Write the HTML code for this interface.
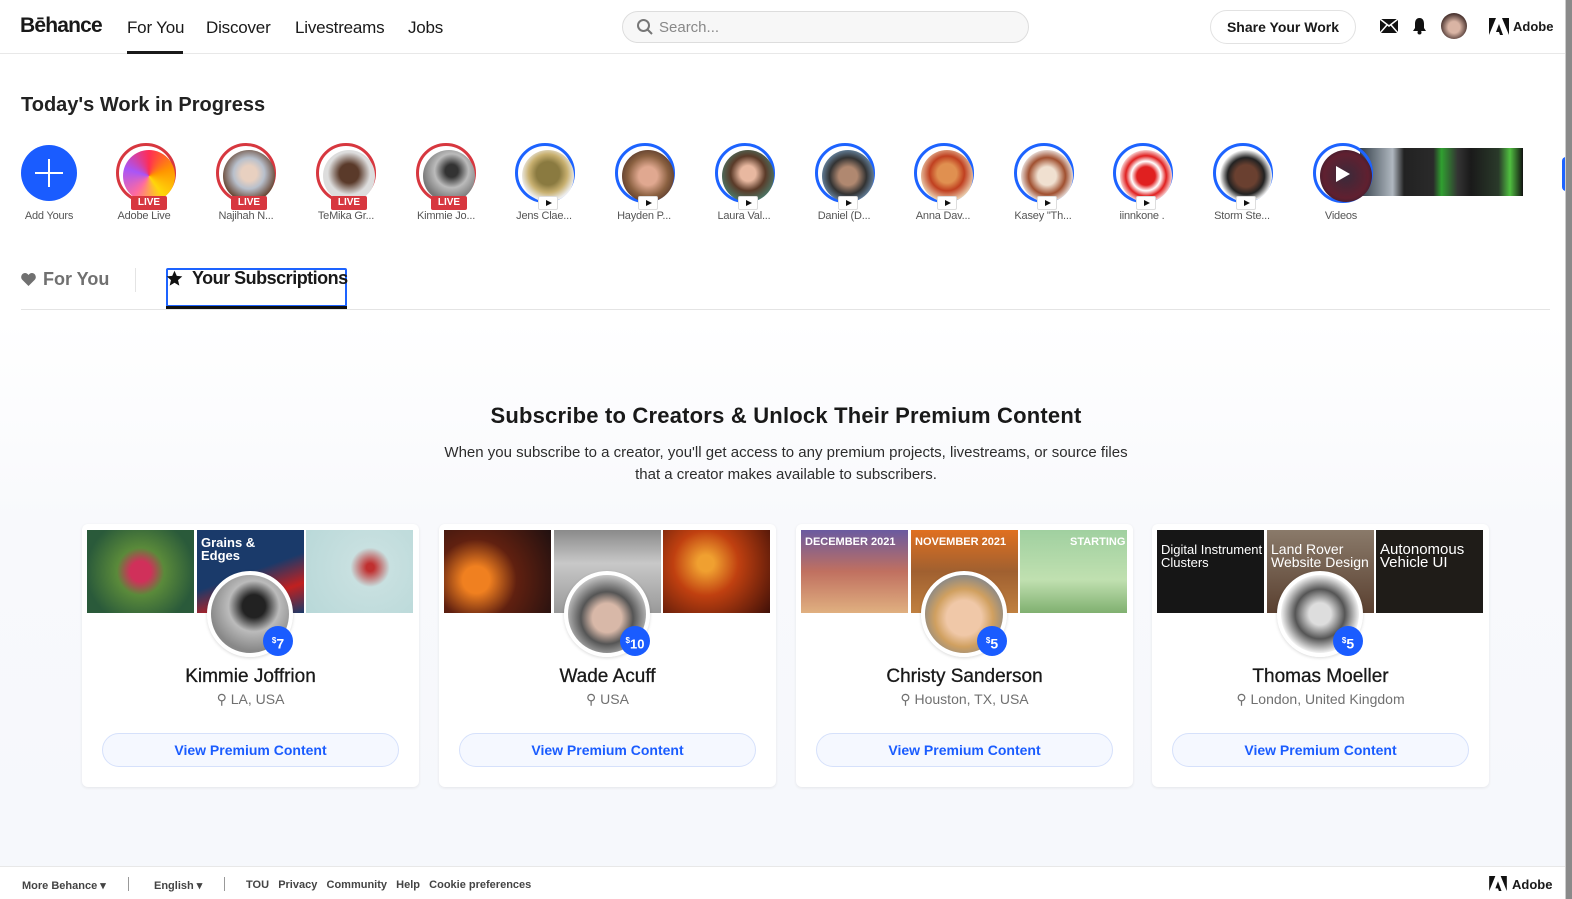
<!DOCTYPE html>
<html><head><meta charset="utf-8"><style>
*{box-sizing:border-box;margin:0;padding:0}
body{width:1572px;height:899px;overflow:hidden;font-family:"Liberation Sans",Arial,sans-serif;color:#191919;background:linear-gradient(#fff 0,#fff 320px,#f8f9fc 520px,#f6f8fc 866px);position:relative}
.abs{position:absolute}
.hdr{left:0;top:0;width:1565px;height:54px;border-bottom:1px solid #e8e8e8;background:#fff}
.nav{top:18px;font-size:17px;color:#191919;letter-spacing:-0.2px}
.scroll{left:1565px;top:0;width:7px;height:899px;background:#8a8a8a;border-left:1px solid #ccc}
.av{width:60px;height:60px;border-radius:50%;top:141px}
.av .in{position:absolute;left:4px;top:4px;width:52px;height:52px;border-radius:50%}
.live{border:3px solid #d7373f}
.blue{border:3px solid #1d63ff}
.badge{position:absolute;left:12px;top:50px;width:36px;height:14px;background:#d7373f;color:#fff;font-size:10px;font-weight:bold;text-align:center;line-height:14px;border-radius:2px}
.play{position:absolute;left:20px;top:50px;width:20px;height:14px;background:#fff;border:1px solid #ddd;border-radius:2px}
.play:after{content:"";position:absolute;left:7px;top:3px;border-left:6px solid #111;border-top:3.5px solid transparent;border-bottom:3.5px solid transparent}
.lbl{top:208px;font-size:11px;color:#555;width:100px;text-align:center;letter-spacing:-0.2px}
.card{top:524px;width:337px;height:263px;background:#fff;border-radius:6px;box-shadow:0 1px 3px rgba(0,0,0,.08)}
.img{position:absolute;top:6px;height:83px;width:107px}
.pav{position:absolute;left:125px;top:47px;width:86px;height:86px;border-radius:50%;border:4px solid #fff;box-shadow:0 1px 3px rgba(0,0,0,.15)}
.price{position:absolute;left:181px;top:102px;width:30px;height:30px;border-radius:50%;background:#1a5cff;color:#fff;font-weight:bold;font-size:14px;text-align:center;line-height:30px}
.price sup{font-size:8px}
.nm{position:absolute;left:0;width:100%;top:142px;text-align:center;font-size:19px;color:#191919;-webkit-text-stroke:0.3px #191919}
.loc{position:absolute;left:0;width:100%;top:167px;text-align:center;font-size:14px;color:#707070}
.btn{position:absolute;left:20px;top:209px;width:297px;height:34px;border:1px solid #d6e1fb;border-radius:17px;background:#f5f8ff;color:#1a5cff;font-weight:bold;font-size:14px;text-align:center;line-height:32px}
.imgt{position:absolute;left:4px;top:6px;color:#fff;font-size:13px;font-weight:bold;line-height:13px}
.ft{top:879px;font-size:11px;color:#444;font-weight:bold}
</style></head><body>
<div class="abs hdr"></div>
<div class="abs" style="left:20px;top:14px;font-size:21px;font-weight:bold;letter-spacing:-0.8px">Bēhance</div>
<div class="abs nav" style="left:127px">For You</div>
<div class="abs" style="left:127px;top:51px;width:56px;height:3px;background:#191919"></div>
<div class="abs nav" style="left:206px">Discover</div>
<div class="abs nav" style="left:295px">Livestreams</div>
<div class="abs nav" style="left:408px">Jobs</div>
<div class="abs" style="left:622px;top:11px;width:407px;height:32px;border:1px solid #ddd;border-radius:16px;background:#f7f7f7"></div>
<svg class="abs" style="left:636px;top:18px" width="18" height="18" viewBox="0 0 18 18"><circle cx="7.5" cy="7.5" r="5.5" fill="none" stroke="#777" stroke-width="2"/><path d="M11.5 11.5L16 16" stroke="#777" stroke-width="2"/></svg>
<div class="abs" style="left:659px;top:19px;font-size:15px;color:#888">Search...</div>
<div class="abs" style="left:1210px;top:10px;width:146px;height:34px;border:1px solid #e2e2e2;border-radius:17px;text-align:center;line-height:33px;font-size:14px;font-weight:bold">Share Your Work</div>
<svg class="abs" style="left:1380px;top:19px" width="18" height="14" viewBox="0 0 18 14"><rect width="18" height="14" fill="#111"/><path d="M0 0L9 7L18 0M0 14L7 6M18 14L11 6" stroke="#fff" stroke-width="1.5" fill="none"/></svg>
<svg class="abs" style="left:1412px;top:17px" width="15" height="18" viewBox="0 0 15 18"><path d="M7.5 1C4 1 3 4 3 7v4L1 14h13l-2-3V7c0-3-1-6-4.5-6z" fill="#111"/><circle cx="7.5" cy="15.5" r="2" fill="#111"/></svg>
<div class="abs" style="left:1441px;top:13px;width:26px;height:26px;border-radius:50%;background:radial-gradient(circle at 50% 55%,#d9b4a4 30%,#4a3430 70%)"></div>
<svg class="abs" style="left:1489px;top:18px" width="20" height="17" viewBox="0 0 20 17"><path d="M0 0h7L0 17zM13 0h7v17zM10 6l4 11h-3l-1-3H7z" fill="#111"/></svg>
<div class="abs" style="left:1513px;top:19px;font-size:13px;font-weight:bold">Adobe</div>

<div class="abs" style="left:0;top:2px;width:1572px;height:860px">
<div class="abs" style="left:21px;top:92px;font-size:20px;font-weight:bold;color:#222">Today's Work in Progress</div>

<div class="abs" style="left:21px;top:143px;width:56px;height:56px;border-radius:50%;background:#1a5cff"></div>
<div class="abs" style="left:35px;top:170px;width:28px;height:2px;background:#fff"></div>
<div class="abs" style="left:48px;top:157px;width:2px;height:28px;background:#fff"></div>
<div class="abs lbl" style="left:-1px">Add Yours</div>

<div class="abs av live" style="left:116px"><div class="in" style="background:conic-gradient(#ff2d55,#ff9500,#ffd60a,#ff6b9e,#a855f7,#ff2d55)"></div><div class="badge">LIVE</div></div>
<div class="abs lbl" style="left:94px">Adobe Live</div>
<div class="abs av live" style="left:216px"><div class="in" style="background:radial-gradient(circle at 50% 45%,#e8d0c0 20%,#b8c0cc 40%,#6a4a38 70%)"></div><div class="badge">LIVE</div></div>
<div class="abs lbl" style="left:196px">Najihah N...</div>
<div class="abs av live" style="left:316px"><div class="in" style="background:radial-gradient(circle at 50% 45%,#5a3a2a 25%,#ddd 55%)"></div><div class="badge">LIVE</div></div>
<div class="abs lbl" style="left:296px">TeMika Gr...</div>
<div class="abs av live" style="left:416px"><div class="in" style="background:radial-gradient(circle at 55% 40%,#333 15%,#bbb 40%,#777 70%)"></div><div class="badge">LIVE</div></div>
<div class="abs lbl" style="left:396px">Kimmie Jo...</div>

<div class="abs av blue" style="left:515px"><div class="in" style="background:radial-gradient(circle at 50% 45%,#8a7a40 30%,#c8b070 50%,#eee 70%)"></div><div class="play"></div></div>
<div class="abs lbl" style="left:494px">Jens Clae...</div>
<div class="abs av blue" style="left:615px"><div class="in" style="background:radial-gradient(circle at 50% 50%,#e0a890 25%,#8a6040 55%,#604030 75%)"></div><div class="play"></div></div>
<div class="abs lbl" style="left:594px">Hayden P...</div>
<div class="abs av blue" style="left:715px"><div class="in" style="background:radial-gradient(circle at 50% 45%,#e8b8a0 20%,#5a3a28 45%,#4a7a6a 75%)"></div><div class="play"></div></div>
<div class="abs lbl" style="left:694px">Laura Val...</div>
<div class="abs av blue" style="left:815px"><div class="in" style="background:radial-gradient(circle at 50% 50%,#b08870 25%,#333 50%,#6a8aa8 75%)"></div><div class="play"></div></div>
<div class="abs lbl" style="left:794px">Daniel (D...</div>
<div class="abs av blue" style="left:914px"><div class="in" style="background:radial-gradient(circle at 50% 45%,#e09050 25%,#c04020 45%,#f0e0c0 75%)"></div><div class="play"></div></div>
<div class="abs lbl" style="left:893px">Anna Dav...</div>
<div class="abs av blue" style="left:1014px"><div class="in" style="background:radial-gradient(circle at 50% 50%,#f0e0d0 25%,#a05030 50%,#f4f4f4 75%)"></div><div class="play"></div></div>
<div class="abs lbl" style="left:993px">Kasey "Th...</div>
<div class="abs av blue" style="left:1113px"><div class="in" style="background:radial-gradient(circle,#e02020 25%,#fff 40%,#e02020 55%,#fff 75%)"></div><div class="play"></div></div>
<div class="abs lbl" style="left:1092px">iinnkone .</div>
<div class="abs av blue" style="left:1213px"><div class="in" style="background:radial-gradient(circle at 50% 50%,#6a4030 30%,#222 50%,#eee 70%)"></div><div class="play"></div></div>
<div class="abs lbl" style="left:1192px">Storm Ste...</div>
<div class="abs" style="left:1360px;top:146px;width:163px;height:48px;background:linear-gradient(90deg,#34404a,#b0b8c0 20%,#222 27%,#2a2a2a 45%,#30a030 50%,#333 60%,#1a1a1a 68%,#2a3a2a 85%,#50c040 92%,#111)"></div>
<div class="abs av blue" style="left:1313px"><div class="in" style="background:radial-gradient(circle,#3a2a3a,#602030 60%,#1a1a2a)"></div></div>
<svg class="abs" style="left:1335px;top:163px" width="16" height="18"><path d="M1 1L15 9L1 17z" fill="#fff"/></svg>
<div class="abs lbl" style="left:1291px">Videos</div>
<div class="abs" style="left:1562px;top:155px;width:4px;height:34px;border:3px solid #1d63ff;border-right:none;border-radius:20px 0 0 20px"></div>

<svg class="abs" style="left:21px;top:271px" width="15" height="13" viewBox="0 0 15 13"><path d="M7.5 13L1 6.5C-1 4 1 0 4 0c1.5 0 2.8 1 3.5 2C8.2 1 9.5 0 11 0c3 0 5 4 3 6.5z" fill="#707070"/></svg>
<div class="abs" style="left:43px;top:267px;font-size:18px;font-weight:bold;color:#707070">For You</div>
<div class="abs" style="left:135px;top:266px;width:1px;height:24px;background:#e4e4e4"></div>
<div class="abs" style="left:166px;top:266px;width:181px;height:39px;border:2px solid #1d63ff;border-radius:2px"></div>
<div class="abs" style="left:166px;top:304px;width:181px;height:3px;background:#111"></div>
<svg class="abs" style="left:166px;top:268px" width="17" height="17" viewBox="0 0 24 24"><path d="M12 1l3.2 7.3 7.8.7-6 5.3 1.8 7.7L12 18l-6.8 4 1.8-7.7-6-5.3 7.8-.7z" fill="#111"/></svg>
<div class="abs" style="left:192px;top:266px;font-size:18px;font-weight:bold;color:#191919;letter-spacing:-0.5px">Your Subscriptions</div>
<div class="abs" style="left:21px;top:307px;width:1529px;height:1px;background:#e4e4e4"></div>

<div class="abs" style="left:0;width:1572px;top:401px;text-align:center;font-size:22px;font-weight:bold;color:#191919;letter-spacing:0.2px">Subscribe to Creators &amp; Unlock Their Premium Content</div>
<div class="abs" style="left:0;width:1572px;top:440px;text-align:center;font-size:15px;line-height:22px;color:#2c2c2c">When you subscribe to a creator, you'll get access to any premium projects, livestreams, or source files<br>that a creator makes available to subscribers.</div>

<div class="abs card" style="left:82px;top:522px">
<div class="img" style="left:5px;background:radial-gradient(circle at 50% 50%,#d0305a 15%,#5a8a3a 35%,#2a5a3a 80%)"></div>
<div class="img" style="left:115px;background:linear-gradient(160deg,#1a3a6a 50%,#c02020 75%,#1a3a6a)"><div class="imgt">Grains &amp;<br>Edges</div></div>
<div class="img" style="left:224px;background:radial-gradient(circle at 60% 45%,#c03030 5%,#c8e0e0 25%,#b8d8d8)"></div>
<div class="pav" style="background:radial-gradient(circle at 55% 40%,#222 18%,#bbb 40%,#888 70%)"></div>
<div class="price"><sup>$</sup>7</div>
<div class="nm">Kimmie Joffrion</div><div class="loc">⚲ LA, USA</div>
<div class="btn">View Premium Content</div></div>

<div class="abs card" style="left:439px;top:522px">
<div class="img" style="left:5px;background:radial-gradient(circle at 30% 60%,#f08020 15%,#602010 45%,#201010)"></div>
<div class="img" style="left:115px;background:linear-gradient(#8a8a8a,#c8c8c8 40%,#999)"></div>
<div class="img" style="left:224px;background:radial-gradient(circle at 40% 40%,#f0a030 10%,#c04010 40%,#401008)"></div>
<div class="pav" style="background:radial-gradient(circle at 50% 55%,#d8b8a8 25%,#555 45%,#ccc 75%)"></div>
<div class="price" style="font-size:13px"><sup>$</sup>10</div>
<div class="nm">Wade Acuff</div><div class="loc">⚲ USA</div>
<div class="btn">View Premium Content</div></div>

<div class="abs card" style="left:796px;top:522px">
<div class="img" style="left:5px;background:linear-gradient(#6a5aa0,#c07060 50%,#e0b080)"><div class="imgt" style="font-size:11px">DECEMBER 2021</div></div>
<div class="img" style="left:115px;background:linear-gradient(#e07020,#a06030 50%,#c08040)"><div class="imgt" style="font-size:11px">NOVEMBER 2021</div></div>
<div class="img" style="left:224px;background:linear-gradient(#a0d0a0,#c0e0b0 60%,#80b070)"><div class="imgt" style="left:50px;font-size:11px">STARTING</div></div>
<div class="pav" style="background:radial-gradient(circle at 50% 55%,#f0c8a8 30%,#d0a060 50%,#888 75%)"></div>
<div class="price"><sup>$</sup>5</div>
<div class="nm">Christy Sanderson</div><div class="loc">⚲ Houston, TX, USA</div>
<div class="btn">View Premium Content</div></div>

<div class="abs card" style="left:1152px;top:522px">
<div class="img" style="left:5px;background:#161616"><div class="imgt" style="font-weight:normal;top:13px">Digital Instrument<br>Clusters</div></div>
<div class="img" style="left:115px;background:linear-gradient(#8a7a6a,#5a4030)"><div class="imgt" style="font-weight:normal;top:13px;font-size:14px">Land Rover<br>Website Design</div></div>
<div class="img" style="left:224px;background:#1f1c18"><div class="imgt" style="font-weight:normal;top:13px;font-size:15px">Autonomous<br>Vehicle UI</div></div>
<div class="pav" style="background:radial-gradient(circle at 50% 50%,#ddd 20%,#555 45%,#eee 70%)"></div>
<div class="price"><sup>$</sup>5</div>
<div class="nm">Thomas Moeller</div><div class="loc">⚲ London, United Kingdom</div>
<div class="btn">View Premium Content</div></div>
</div>

<div class="abs" style="left:0;top:866px;width:1565px;height:33px;background:#fff;border-top:1px solid #e8e8e8"></div>
<div class="abs ft" style="left:22px">More Behance ▾</div>
<div class="abs" style="left:128px;top:877px;width:1px;height:14px;background:#999"></div>
<div class="abs ft" style="left:154px">English ▾</div>
<div class="abs" style="left:224px;top:877px;width:1px;height:14px;background:#999"></div>
<div class="abs ft" style="left:246px">TOU&nbsp;&nbsp; Privacy&nbsp;&nbsp; Community&nbsp;&nbsp; Help&nbsp;&nbsp; Cookie preferences</div>
<svg class="abs" style="left:1489px;top:876px" width="18" height="15" viewBox="0 0 20 17"><path d="M0 0h7L0 17zM13 0h7v17zM10 6l4 11h-3l-1-3H7z" fill="#111"/></svg>
<div class="abs" style="left:1512px;top:877px;font-size:13px;font-weight:bold">Adobe</div>
<div class="abs scroll"></div>
</body></html>
